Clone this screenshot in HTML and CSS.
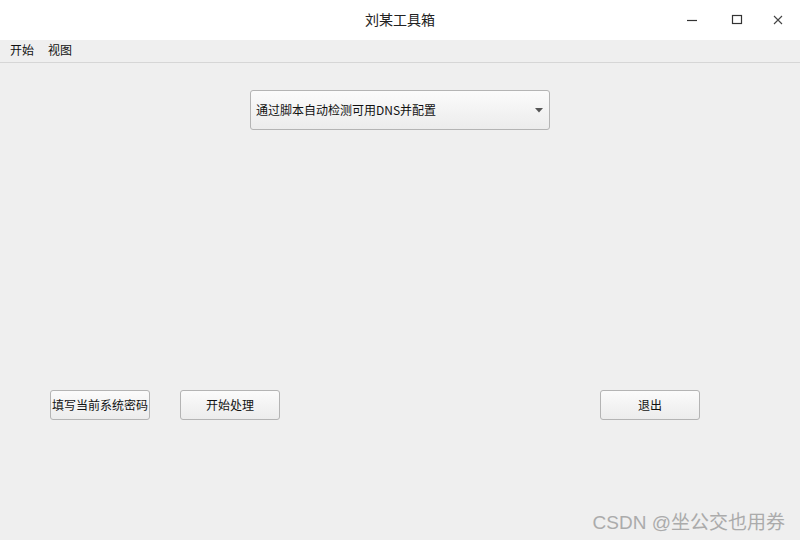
FILE: index.html
```html
<!DOCTYPE html>
<html>
<head>
<meta charset="utf-8">
<link rel="stylesheet" href="styles.css">
</head>
<body>
<div class="window">
  <div class="titlebar">
    <div class="title">刘某工具箱</div>
    <div class="controls">
      <span class="ctl"><svg width="12" height="12" viewBox="0 0 12 12"><path d="M1 6.5H11" stroke="#333" stroke-width="1.2"/></svg></span>
      <span class="ctl"><svg width="12" height="12" viewBox="0 0 12 12"><rect x="1.5" y="1.5" width="9" height="8" fill="none" stroke="#333" stroke-width="1.2"/></svg></span>
      <span class="ctl"><svg width="12" height="12" viewBox="0 0 12 12"><path d="M2 2L10 10M10 2L2 10" stroke="#444" stroke-width="1.1"/></svg></span>
    </div>
  </div>
  <div class="menubar">
    <span class="menu">开始</span>
    <span class="menu">视图</span>
  </div>
  <div class="content">
    <div class="combo-row">
      <div class="combo">
        <span class="combo-text">通过脚本自动检测可用DNS并配置</span>
        <svg width="8" height="5" viewBox="0 0 8 5"><path d="M0 0H8L4 4.5Z" fill="#555"/></svg>
      </div>
    </div>
    <div class="buttons">
      <div class="btn">填写当前系统密码</div>
      <div class="btn">开始处理</div>
      <div class="spacer"></div>
      <div class="btn">退出</div>
    </div>
    <div class="watermark">CSDN @坐公交也用券</div>
  </div>
</div>
</body>
</html>
```
FILE: styles.css
```css
* { box-sizing: border-box; }
html, body { margin: 0; padding: 0; }
body {
  width: 800px; height: 540px; overflow: hidden;
  font-family: "Noto Sans CJK SC", "Noto Sans", sans-serif;
  background: #efefef;
}
.window { width: 800px; height: 540px; display: flex; flex-direction: column; }
.titlebar {
  height: 40px; background: #ffffff; position: relative;
  display: flex; align-items: center; justify-content: center;
}
.title { font-size: 14px; color: #222; padding-left: 0px; margin-top: -2px; }
.controls {
  position: absolute; right: 0; top: 0; height: 40px;
  display: flex; align-items: center;
}
.ctl { height: 40px; display: flex; align-items: center; justify-content: center; }
.controls .ctl:nth-child(1) { width: 52px; }
.controls .ctl:nth-child(2) { width: 38px; }
.controls .ctl:nth-child(3) { width: 44px; }
.menubar {
  height: 23px; background: #efefef; border-bottom: 1px solid #d6d6d6;
  display: flex; align-items: center; padding-left: 10px; gap: 14px;
  font-size: 12px; line-height: 16px; color: #111; padding-bottom: 3px;
}
.content { flex: 1; position: relative; }
.combo-row { display: flex; padding-top: 27px; padding-left: 250px; }
.combo {
  width: 300px; height: 40px; border: 1px solid #b4b4b4; border-radius: 3px;
  background: linear-gradient(#fbfbfb, #ececec);
  display: flex; align-items: center; justify-content: space-between;
  padding: 0 6px 0 5px; font-size: 12px; color: #111;
}
.combo-text { margin-top: -2px; }
.buttons { display: flex; padding-left: 50px; padding-top: 260px; gap: 30px; }
.spacer { width: 260px; }
.btn {
  width: 100px; height: 30px; border: 1px solid #b4b4b4; border-radius: 3px;
  background: linear-gradient(#fbfbfb, #ececec);
  display: flex; align-items: center; justify-content: center;
  font-size: 12px; color: #111; white-space: nowrap; padding-bottom: 2px;
}
.watermark {
  position: absolute; right: 15px; bottom: 6px;
  font-family: "Liberation Sans", "Noto Sans CJK SC", sans-serif;
  font-size: 19px; color: #ababab;
}
```
